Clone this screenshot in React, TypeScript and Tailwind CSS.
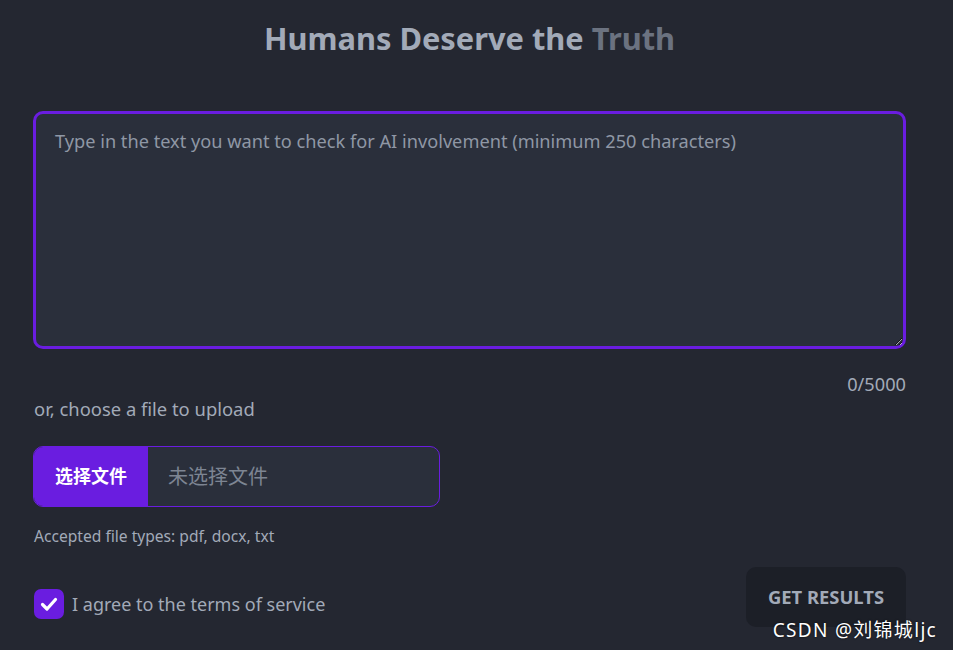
import React from "react";

export default function App() {
  return (
    <div
      className="min-h-[650px] w-full bg-[#242731] pl-[33px] pr-[47px] font-['Noto_Sans','Noto_Sans_CJK_SC',sans-serif] relative overflow-hidden"
    >
      <h1 className="pt-[18px] text-center text-[30.8px] font-bold leading-[40px] text-[#a2aab8]">
        Humans Deserve the <span className="text-[#6b7280]">Truth</span>
      </h1>

      <div className="mt-[53px]">
        <textarea
          className="block h-[238px] w-full resize-y rounded-[10px] border-[3px] border-[#6a1de0] bg-[#2a2f3b] px-[19px] pt-[13px] pb-[15px] text-[18.2px] leading-[28px] text-[#a2aab8] placeholder:text-[#8f97a5] outline-none"
          placeholder="Type in the text you want to check for AI involvement (minimum 250 characters)"
        />
      </div>

      <div className="mt-[23px] text-right text-[18.2px] leading-[24px] text-[#a2aab8]">0/5000</div>
      <div className="mt-[1px] ml-[1px] text-[18.4px] leading-[24px] text-[#a2aab8]">or, choose a file to upload</div>

      <div className="mt-[25px] flex h-[61px] w-[407px] overflow-hidden rounded-[10px] border border-[#6a1de0] bg-[#2a2f3b]">
        <div className="flex w-[114px] items-center justify-center bg-[#6a1de0] text-[18px] font-bold text-white">
          选择文件
        </div>
        <div className="flex items-center pl-[20px] text-[20px] text-[#7d8593]">未选择文件</div>
      </div>

      <div className="mt-[18px] ml-[1px] text-[15.6px] leading-[22px] text-[#a2aab8]">Accepted file types: pdf, docx, txt</div>

      <div className="mt-[20px] flex items-center justify-between">
        <label className="mt-[14px] ml-[1px] flex items-center gap-[8px]">
          <span className="flex h-[30px] w-[30px] items-center justify-center rounded-[7px] bg-[#6a1de0]">
            <svg width="20" height="20" viewBox="0 0 20 20" fill="none">
              <path d="M3.5 10.5 L8 15 L16.5 5.5" stroke="white" strokeWidth="3.2" strokeLinecap="round" strokeLinejoin="round" />
            </svg>
          </span>
          <span className="text-[18px] leading-[24px] text-[#a2aab8]">I agree to the terms of service</span>
        </label>
        <button className="h-[60px] w-[160px] rounded-[10px] bg-[#1c1f27] text-[18.4px] font-bold text-[#a2aab8]">
          GET RESULTS
        </button>
      </div>

      <div className="absolute bottom-[8px] right-[16px] text-[19px] leading-[24px] tracking-[1.3px] text-white [text-shadow:0_0_2px_rgba(0,0,0,0.8)]">
        CSDN @刘锦城ljc
      </div>
    </div>
  );
}
